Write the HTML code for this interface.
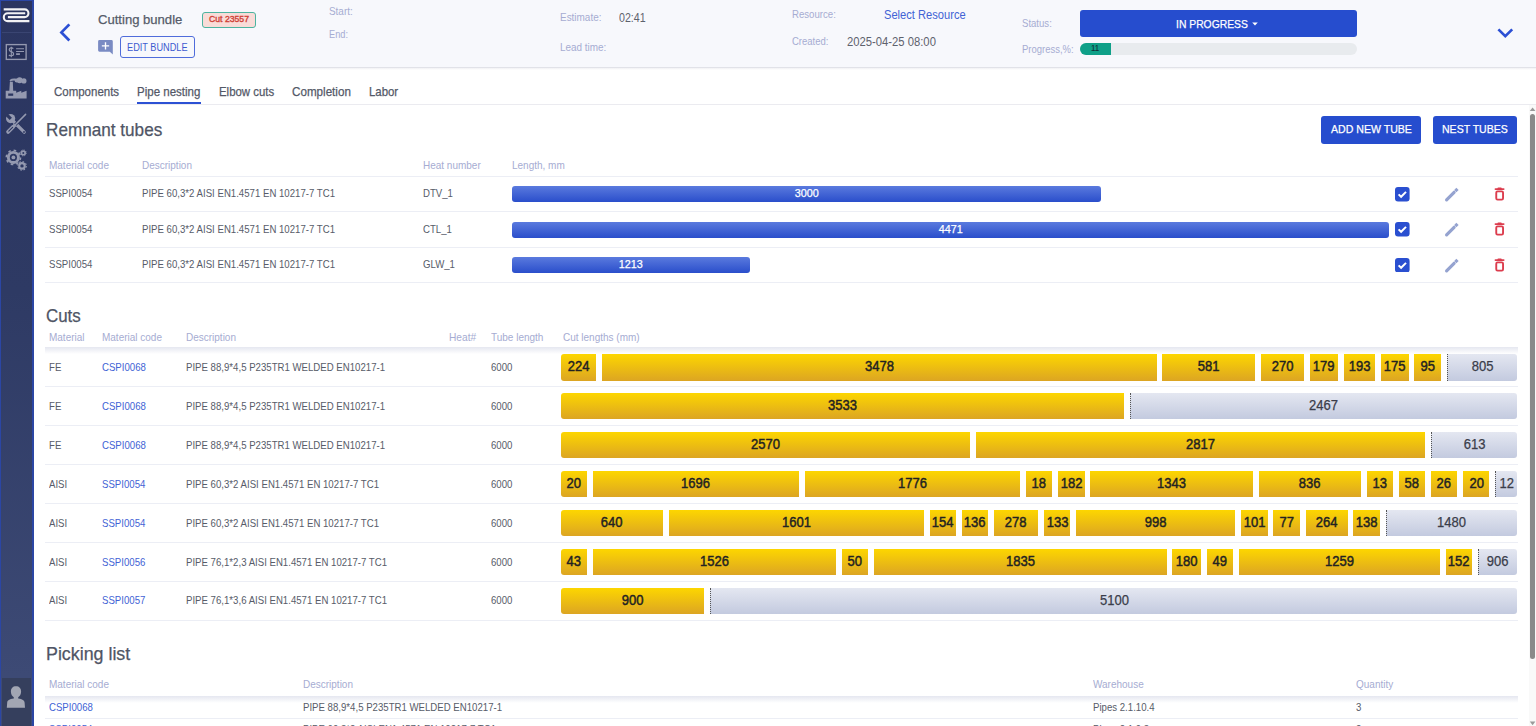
<!DOCTYPE html>
<html><head><meta charset="utf-8"><style>
html,body{margin:0;padding:0;}
body{width:1536px;height:726px;overflow:hidden;position:relative;background:#fff;font-family:"Liberation Sans", sans-serif;}
.t{position:absolute;white-space:nowrap;line-height:1;}
.bars{position:absolute;left:560.7px;width:956.6px;height:26.2px;display:flex;}
.cb{min-width:26.4px;margin-right:5.8px;box-sizing:border-box;background:linear-gradient(#fdd600,#dca523);color:#222;font-size:14px;line-height:26.1px;text-align:center;overflow:hidden;white-space:nowrap;display:flex;justify-content:center;}
.cb span,.rb span{display:inline-block;position:relative;top:-1.2px;transform:scaleX(0.93);-webkit-text-stroke:0.45px #222;}
.rb span{-webkit-text-stroke:0.25px #3a3d4a;}
.rb{flex:1 1 0;min-width:22px;box-sizing:border-box;border-left:1px dotted #555;border-radius:0 3px 3px 0;background:linear-gradient(#e4e7f1,#c3cadf);color:#3a3d4a;font-size:14px;line-height:26.1px;text-align:center;overflow:hidden;white-space:nowrap;display:flex;justify-content:center;}
</style></head><body>
<div style="position:absolute;left:33.00px;top:0.00px;width:1503.00px;height:67.00px;background:#f7f8fc;"></div><div style="position:absolute;left:33.00px;top:67.00px;width:1503.00px;height:1.00px;background:#e1e2e8;"></div><div style="position:absolute;left:33.00px;top:68.00px;width:1503.00px;height:1.50px;background:linear-gradient(#f1f1f4,#fff);"></div><svg style="position:absolute;left:57px;top:22px" width="16" height="22" viewBox="0 0 16 22"><path d="M11.4 3.3 L4.4 10.4 L11.4 17.5" fill="none" stroke="#2b4fd4" stroke-width="2.7" stroke-linecap="square" stroke-linejoin="miter"/></svg><div class="t" style="left:97.50px;top:13.30px;font-size:13.20px;color:#555b69;font-weight:normal;transform:scaleX(0.9913);transform-origin:0 0;-webkit-text-stroke:0.25px #555b69;">Cutting bundle</div><div style="position:absolute;left:202.30px;top:12.10px;width:53.40px;height:15.80px;box-sizing:border-box;border:1.1px solid #4cb4a0;background:#f9dcd8;border-radius:3px;"></div><div class="t" style="left:209.00px;top:15.00px;font-size:8.80px;color:#cf3f35;font-weight:normal;transform:scaleX(0.9849);transform-origin:0 0;-webkit-text-stroke:0.35px #cf3f35;">Cut 23557</div><svg style="position:absolute;left:98px;top:39.5px" width="16" height="16" viewBox="0 0 16 16"><path d="M1.5 0.1 H13.4 A1.4 1.4 0 0 1 14.8 1.5 V14.5 L11.8 11.7 H1.5 A1.4 1.4 0 0 1 0.1 10.3 V1.5 A1.4 1.4 0 0 1 1.5 0.1 Z" fill="#7a8bc3"/><path d="M7.5 2.2 V9.5 M3.85 5.9 H11.15" stroke="#fff" stroke-width="1.35"/></svg><div style="position:absolute;left:120.10px;top:36.00px;width:74.70px;height:21.50px;box-sizing:border-box;border:1px solid #4f6cdb;border-radius:3px;"></div><div class="t" style="left:127.40px;top:42.15px;font-size:10.50px;color:#3d5bd0;font-weight:normal;transform:scaleX(0.8751);transform-origin:0 0;">EDIT BUNDLE</div><div class="t" style="left:328.90px;top:6.75px;font-size:10.30px;color:#a6acd2;font-weight:normal;transform:scaleX(0.9627);transform-origin:0 0;">Start:</div><div class="t" style="left:328.90px;top:29.75px;font-size:10.30px;color:#a6acd2;font-weight:normal;transform:scaleX(0.8976);transform-origin:0 0;">End:</div><div class="t" style="left:560.20px;top:12.75px;font-size:10.30px;color:#a6acd2;font-weight:normal;transform:scaleX(0.9662);transform-origin:0 0;">Estimate:</div><div class="t" style="left:618.80px;top:12.25px;font-size:12.30px;color:#5e626d;font-weight:normal;transform:scaleX(0.8666);transform-origin:0 0;">02:41</div><div class="t" style="left:560.20px;top:42.75px;font-size:10.30px;color:#a6acd2;font-weight:normal;transform:scaleX(0.9646);transform-origin:0 0;">Lead time:</div><div class="t" style="left:791.70px;top:9.75px;font-size:10.30px;color:#a6acd2;font-weight:normal;transform:scaleX(0.9347);transform-origin:0 0;">Resource:</div><div class="t" style="left:883.50px;top:9.25px;font-size:12.30px;color:#4263d5;font-weight:normal;transform:scaleX(0.9056);transform-origin:0 0;">Select Resource</div><div class="t" style="left:791.70px;top:36.75px;font-size:10.30px;color:#a6acd2;font-weight:normal;transform:scaleX(0.9240);transform-origin:0 0;">Created:</div><div class="t" style="left:847.40px;top:36.25px;font-size:12.30px;color:#5e626d;font-weight:normal;transform:scaleX(0.9155);transform-origin:0 0;">2025-04-25 08:00</div><div class="t" style="left:1022.40px;top:18.75px;font-size:10.30px;color:#a6acd2;font-weight:normal;transform:scaleX(0.9300);transform-origin:0 0;">Status:</div><div class="t" style="left:1022.40px;top:44.75px;font-size:10.30px;color:#a6acd2;font-weight:normal;transform:scaleX(0.9201);transform-origin:0 0;">Progress,%:</div><div style="position:absolute;left:1080.10px;top:9.60px;width:277.40px;height:27.90px;background:#264dce;border-radius:3px;"></div><div class="t" style="left:1175.60px;top:18.50px;font-size:11.80px;color:#fff;font-weight:normal;transform:scaleX(0.8774);transform-origin:0 0;-webkit-text-stroke:0.25px #fff;">IN PROGRESS</div><svg style="position:absolute;left:1252px;top:21.5px" width="6" height="4" viewBox="0 0 6 4"><path d="M0.2 0.4 H5.8 L3 3.4 Z" fill="#fff"/></svg><div style="position:absolute;left:1080.10px;top:43.10px;width:277.40px;height:11.90px;background:#e8ebee;border-radius:6px;overflow:hidden;"></div><div style="position:absolute;left:1080.10px;top:43.10px;width:30.70px;height:11.90px;background:#0fa088;border-radius:6px 0 0 6px;"></div><div class="t" style="left:1091.40px;top:43.20px;font-size:9.40px;color:#0f2f36;font-weight:normal;transform:scaleX(0.8490);transform-origin:0 0;-webkit-text-stroke:0.1px #0f2f36;">11</div><svg style="position:absolute;left:1495px;top:25px" width="21" height="15" viewBox="0 0 21 15"><path d="M3.4 4.4 L10.3 11.2 L17.2 4.4" fill="none" stroke="#2b4fd4" stroke-width="2.7"/></svg><div style="position:absolute;left:33.00px;top:104.00px;width:1503.00px;height:1.00px;background:#ebebf0;"></div><div class="t" style="left:54.20px;top:85.50px;font-size:12.80px;color:#535867;font-weight:normal;transform:scaleX(0.8970);transform-origin:0 0;-webkit-text-stroke:0.25px #535867;">Components</div><div class="t" style="left:137.30px;top:85.50px;font-size:12.80px;color:#535867;font-weight:normal;transform:scaleX(0.8998);transform-origin:0 0;-webkit-text-stroke:0.25px #535867;">Pipe nesting</div><div class="t" style="left:218.80px;top:85.50px;font-size:12.80px;color:#535867;font-weight:normal;transform:scaleX(0.8919);transform-origin:0 0;-webkit-text-stroke:0.25px #535867;">Elbow cuts</div><div class="t" style="left:292.20px;top:85.50px;font-size:12.80px;color:#535867;font-weight:normal;transform:scaleX(0.9094);transform-origin:0 0;-webkit-text-stroke:0.25px #535867;">Completion</div><div class="t" style="left:368.80px;top:85.50px;font-size:12.80px;color:#535867;font-weight:normal;transform:scaleX(0.8911);transform-origin:0 0;-webkit-text-stroke:0.25px #535867;">Labor</div><div style="position:absolute;left:136.90px;top:102.20px;width:64.20px;height:1.90px;background:#2d51d4;"></div><div style="position:absolute;left:0.00px;top:0.00px;width:33.70px;height:726.00px;background:linear-gradient(#2b3560 0%,#2e3a64 40%,#3d4a75 93%);box-sizing:border-box;border-left:1.8px solid #2b46a4;border-right:2.3px solid #2b46a4;border-top:1.2px solid #2b46a4;"></div><div style="position:absolute;left:1.80px;top:31.50px;width:29.20px;height:1.00px;background:#3a4572;"></div><div style="position:absolute;left:1.80px;top:677.70px;width:29.20px;height:48.30px;background:#353f5d;"></div><svg style="position:absolute;left:0px;top:0px" width="33" height="33" viewBox="0 0 33 33"><path d="M3.7 9.4 H24.6 A3.85 3.85 0 0 1 24.6 17.1 H7.9" fill="none" stroke="#f2f2f4" stroke-width="2.1"/><path d="M25.2 13.3 H7.7 A3.9 3.9 0 0 0 7.7 21.1 H29.4" fill="none" stroke="#f2f2f4" stroke-width="2.1"/></svg><svg style="position:absolute;left:2px;top:38px" width="30" height="28" viewBox="0 0 30 28"><rect x="4.3" y="6.6" width="19.8" height="14.8" fill="#262f57" stroke="#9499b0" stroke-width="1.35"/><path d="M11.3 10.6 C10.5 9.6 7.2 9.4 7.2 11.7 C7.2 14 11.6 13.3 11.6 15.9 C11.6 18.3 8 18 6.9 17" fill="none" stroke="#9499b0" stroke-width="1.2"/><path d="M9.3 8.8 V19.2" stroke="#9499b0" stroke-width="1.1"/><path d="M14.1 10.7 H22 M14.1 13.5 H22" stroke="#9499b0" stroke-width="1.1"/><path d="M14.1 16.1 H17.9" stroke="#9499b0" stroke-width="1.7"/></svg><svg style="position:absolute;left:2px;top:72px" width="30" height="30" viewBox="0 0 30 30"><path d="M3.7 26.4 V18.8 H7.3 L7.9 9.7 H10.8 L11.2 18.8 H14.2 V20.7 L19.3 18.8 V20.7 L24.6 18.8 V26.4 Z" fill="#9499b0"/><rect x="6.2" y="21.5" width="5" height="2.3" fill="#2c3760"/><circle cx="17.6" cy="8.3" r="3" fill="#9499b0"/><circle cx="21.9" cy="8.9" r="2.6" fill="#9499b0"/><circle cx="14.6" cy="8.4" r="2" fill="#9499b0"/><path d="M8.6 8.4 C10 7.2 12 7.6 14 7.6" fill="none" stroke="#9499b0" stroke-width="1.9" stroke-linecap="round"/></svg><svg style="position:absolute;left:2px;top:108px" width="30" height="30" viewBox="0 0 30 30"><circle cx="8.6" cy="10.6" r="4.6" fill="#9499b0"/><path d="M8.8 10.8 L4.6 6.6" stroke="#2c3760" stroke-width="3.2"/><path d="M10.5 12.5 L22.2 24.2" stroke="#9499b0" stroke-width="3.2" stroke-linecap="round"/><circle cx="22" cy="24" r="0.9" fill="#2c3760"/><path d="M20 10 L9 21" stroke="#2c3760" stroke-width="3"/><path d="M23.6 6.4 L12.8 17.2" stroke="#9499b0" stroke-width="1.5" stroke-linecap="round"/><path d="M11.5 16 L14 18.5" stroke="#9499b0" stroke-width="1.6"/><path d="M11.3 18.7 L6.1 23.9" stroke="#9499b0" stroke-width="3.8" stroke-linecap="round"/><path d="M10.6 19.4 L6.8 23.2" stroke="#2c3760" stroke-width="1.1" stroke-linecap="round"/></svg><svg style="position:absolute;left:2px;top:144px" width="30" height="30" viewBox="0 0 30 30"><g fill="none" stroke="#9499b0"><circle cx="11.4" cy="13.4" r="5.05" stroke-width="2.9"/><circle cx="11.4" cy="13.4" r="7.1" stroke-width="1.6" stroke-dasharray="2.6 2.98"/><circle cx="21.3" cy="8.9" r="1.85" stroke-width="1.7"/><circle cx="21.3" cy="8.9" r="3" stroke-width="0.9" stroke-dasharray="1.1 1.26"/><circle cx="20" cy="21.9" r="2.75" stroke-width="2.1"/><circle cx="20" cy="21.9" r="4.3" stroke-width="1.1" stroke-dasharray="1.6 1.78"/></g><circle cx="11.4" cy="13.4" r="1.9" fill="#9499b0"/></svg><svg style="position:absolute;left:0px;top:680px" width="33" height="33" viewBox="0 0 33 33"><path d="M16 6.2 C19.2 6.2 21.1 8.2 21.1 11.6 C21.1 14.6 19.7 16.5 18.2 17.2 V18.6 C22.5 19.3 24.4 20.4 24.6 22.5 L25 27.7 H6.8 L7.2 22.5 C7.4 20.4 9.3 19.3 13.8 18.6 V17.2 C12.3 16.5 10.9 14.6 10.9 11.6 C10.9 8.2 12.8 6.2 16 6.2 Z" fill="#a2a6b3"/></svg><div style="position:absolute;left:1529.00px;top:105.00px;width:7.00px;height:621.00px;background:#f9f9f9;"></div><svg style="position:absolute;left:1529px;top:105px" width="7" height="8" viewBox="0 0 7 8"><path d="M0.8 6 H6.4 L3.6 2.6 Z" fill="#9a9a9a"/></svg><div style="position:absolute;left:1530.00px;top:114.00px;width:5.00px;height:545.00px;background:#8a8a8a;border-radius:2.5px;"></div><svg style="position:absolute;left:1529px;top:719px" width="7" height="7" viewBox="0 0 7 7"><path d="M0.8 2.6 H6.4 L3.6 6.2 Z" fill="#9a9a9a"/></svg><div class="t" style="left:46.00px;top:121.30px;font-size:18.20px;color:#4f5565;font-weight:normal;transform:scaleX(0.9425);transform-origin:0 0;-webkit-text-stroke:0.25px #4f5565;">Remnant tubes</div><div style="position:absolute;left:1320.70px;top:116.00px;width:99.90px;height:28.00px;background:#264dce;border-radius:3px;"></div><div class="t" style="left:1330.50px;top:123.65px;font-size:11.50px;color:#fff;font-weight:normal;transform:scaleX(0.9196);transform-origin:0 0;-webkit-text-stroke:0.25px #fff;">ADD NEW TUBE</div><div style="position:absolute;left:1432.80px;top:116.00px;width:84.60px;height:28.00px;background:#264dce;border-radius:3px;"></div><div class="t" style="left:1442.10px;top:123.65px;font-size:11.50px;color:#fff;font-weight:normal;transform:scaleX(0.9162);transform-origin:0 0;-webkit-text-stroke:0.25px #fff;">NEST TUBES</div><div class="t" style="left:48.50px;top:160.75px;font-size:10.30px;color:#a6acd2;font-weight:normal;transform:scaleX(0.9700);transform-origin:0 0;">Material code</div><div class="t" style="left:141.90px;top:160.75px;font-size:10.30px;color:#a6acd2;font-weight:normal;transform:scaleX(0.9700);transform-origin:0 0;">Description</div><div class="t" style="left:422.90px;top:160.75px;font-size:10.30px;color:#a6acd2;font-weight:normal;transform:scaleX(0.9700);transform-origin:0 0;">Heat number</div><div class="t" style="left:511.90px;top:160.75px;font-size:10.30px;color:#a6acd2;font-weight:normal;transform:scaleX(0.9700);transform-origin:0 0;">Length, mm</div><div style="position:absolute;left:45.00px;top:176.00px;width:1472.50px;height:1.00px;background:#eceef5;"></div><div style="position:absolute;left:45.00px;top:211.40px;width:1472.50px;height:1.00px;background:#eceef5;"></div><div style="position:absolute;left:45.00px;top:246.80px;width:1472.50px;height:1.00px;background:#eceef5;"></div><div style="position:absolute;left:45.00px;top:282.20px;width:1472.50px;height:1.00px;background:#eceef5;"></div><div class="t" style="left:48.50px;top:188.75px;font-size:10.30px;color:#575c69;font-weight:normal;transform:scaleX(0.9350);transform-origin:0 0;">SSPI0054</div><div class="t" style="left:141.90px;top:188.75px;font-size:10.30px;color:#575c69;font-weight:normal;transform:scaleX(0.9350);transform-origin:0 0;">PIPE 60,3*2 AISI EN1.4571 EN 10217-7 TC1</div><div class="t" style="left:422.90px;top:188.75px;font-size:10.30px;color:#575c69;font-weight:normal;transform:scaleX(0.9350);transform-origin:0 0;">DTV_1</div><div style="position:absolute;left:511.9px;top:186.25px;width:588.66px;height:15.9px;border-radius:3px;background:linear-gradient(#5a7ade,#2a4ecb);color:#fff;font-size:11.4px;line-height:15.9px;text-align:center;"><span style="display:inline-block;transform:scaleX(0.95);-webkit-text-stroke:0.25px #fff">3000</span></div><svg style="position:absolute;left:1395px;top:187.00px" width="14.6" height="14.6" viewBox="0 0 14.6 14.6"><rect x="0" y="0" width="14.6" height="14.6" rx="3" fill="#2a4fd0"/><path d="M3.6 7.4 L6.1 9.8 L11 4.9" fill="none" stroke="#fff" stroke-width="2"/></svg><svg style="position:absolute;left:1440px;top:181.70px" width="22" height="22" viewBox="0 0 22 22"><path d="M6.6 17.8 L14.1 10.3" stroke="#95a3d0" stroke-width="3.2" stroke-linecap="round"/><path d="M15.3 9.1 L17.5 6.9" stroke="#95a3d0" stroke-width="3.2"/></svg><svg style="position:absolute;left:1494px;top:187.00px" width="12" height="15" viewBox="0 0 12 15"><path d="M1.5 2.1 H9.6" stroke="#dc3d4e" stroke-width="1.9" stroke-linecap="round"/><rect x="3.4" y="0.4" width="4.4" height="1.8" rx="0.9" fill="#dc3d4e"/><rect x="2.25" y="4.35" width="6.8" height="8.3" rx="1.3" fill="none" stroke="#dc3d4e" stroke-width="1.9"/></svg><div class="t" style="left:48.50px;top:224.75px;font-size:10.30px;color:#575c69;font-weight:normal;transform:scaleX(0.9350);transform-origin:0 0;">SSPI0054</div><div class="t" style="left:141.90px;top:224.75px;font-size:10.30px;color:#575c69;font-weight:normal;transform:scaleX(0.9350);transform-origin:0 0;">PIPE 60,3*2 AISI EN1.4571 EN 10217-7 TC1</div><div class="t" style="left:422.90px;top:224.75px;font-size:10.30px;color:#575c69;font-weight:normal;transform:scaleX(0.9350);transform-origin:0 0;">CTL_1</div><div style="position:absolute;left:511.9px;top:221.65px;width:877.30px;height:15.9px;border-radius:3px;background:linear-gradient(#5a7ade,#2a4ecb);color:#fff;font-size:11.4px;line-height:15.9px;text-align:center;"><span style="display:inline-block;transform:scaleX(0.95);-webkit-text-stroke:0.25px #fff">4471</span></div><svg style="position:absolute;left:1395px;top:222.40px" width="14.6" height="14.6" viewBox="0 0 14.6 14.6"><rect x="0" y="0" width="14.6" height="14.6" rx="3" fill="#2a4fd0"/><path d="M3.6 7.4 L6.1 9.8 L11 4.9" fill="none" stroke="#fff" stroke-width="2"/></svg><svg style="position:absolute;left:1440px;top:217.10px" width="22" height="22" viewBox="0 0 22 22"><path d="M6.6 17.8 L14.1 10.3" stroke="#95a3d0" stroke-width="3.2" stroke-linecap="round"/><path d="M15.3 9.1 L17.5 6.9" stroke="#95a3d0" stroke-width="3.2"/></svg><svg style="position:absolute;left:1494px;top:222.40px" width="12" height="15" viewBox="0 0 12 15"><path d="M1.5 2.1 H9.6" stroke="#dc3d4e" stroke-width="1.9" stroke-linecap="round"/><rect x="3.4" y="0.4" width="4.4" height="1.8" rx="0.9" fill="#dc3d4e"/><rect x="2.25" y="4.35" width="6.8" height="8.3" rx="1.3" fill="none" stroke="#dc3d4e" stroke-width="1.9"/></svg><div class="t" style="left:48.50px;top:259.75px;font-size:10.30px;color:#575c69;font-weight:normal;transform:scaleX(0.9350);transform-origin:0 0;">SSPI0054</div><div class="t" style="left:141.90px;top:259.75px;font-size:10.30px;color:#575c69;font-weight:normal;transform:scaleX(0.9350);transform-origin:0 0;">PIPE 60,3*2 AISI EN1.4571 EN 10217-7 TC1</div><div class="t" style="left:422.90px;top:259.75px;font-size:10.30px;color:#575c69;font-weight:normal;transform:scaleX(0.9350);transform-origin:0 0;">GLW_1</div><div style="position:absolute;left:511.9px;top:257.05px;width:238.01px;height:15.9px;border-radius:3px;background:linear-gradient(#5a7ade,#2a4ecb);color:#fff;font-size:11.4px;line-height:15.9px;text-align:center;"><span style="display:inline-block;transform:scaleX(0.95);-webkit-text-stroke:0.25px #fff">1213</span></div><svg style="position:absolute;left:1395px;top:257.80px" width="14.6" height="14.6" viewBox="0 0 14.6 14.6"><rect x="0" y="0" width="14.6" height="14.6" rx="3" fill="#2a4fd0"/><path d="M3.6 7.4 L6.1 9.8 L11 4.9" fill="none" stroke="#fff" stroke-width="2"/></svg><svg style="position:absolute;left:1440px;top:252.50px" width="22" height="22" viewBox="0 0 22 22"><path d="M6.6 17.8 L14.1 10.3" stroke="#95a3d0" stroke-width="3.2" stroke-linecap="round"/><path d="M15.3 9.1 L17.5 6.9" stroke="#95a3d0" stroke-width="3.2"/></svg><svg style="position:absolute;left:1494px;top:257.80px" width="12" height="15" viewBox="0 0 12 15"><path d="M1.5 2.1 H9.6" stroke="#dc3d4e" stroke-width="1.9" stroke-linecap="round"/><rect x="3.4" y="0.4" width="4.4" height="1.8" rx="0.9" fill="#dc3d4e"/><rect x="2.25" y="4.35" width="6.8" height="8.3" rx="1.3" fill="none" stroke="#dc3d4e" stroke-width="1.9"/></svg><div class="t" style="left:45.70px;top:307.30px;font-size:18.20px;color:#4f5565;font-weight:normal;transform:scaleX(0.9278);transform-origin:0 0;-webkit-text-stroke:0.25px #4f5565;">Cuts</div><div class="t" style="left:48.70px;top:332.75px;font-size:10.30px;color:#a6acd2;font-weight:normal;transform:scaleX(0.9700);transform-origin:0 0;">Material</div><div class="t" style="left:101.90px;top:332.75px;font-size:10.30px;color:#a6acd2;font-weight:normal;transform:scaleX(0.9700);transform-origin:0 0;">Material code</div><div class="t" style="left:186.10px;top:332.75px;font-size:10.30px;color:#a6acd2;font-weight:normal;transform:scaleX(0.9700);transform-origin:0 0;">Description</div><div class="t" style="left:490.50px;top:332.75px;font-size:10.30px;color:#a6acd2;font-weight:normal;transform:scaleX(0.9700);transform-origin:0 0;">Tube length</div><div class="t" style="left:563.00px;top:332.75px;font-size:10.30px;color:#a6acd2;font-weight:normal;transform:scaleX(0.9700);transform-origin:0 0;">Cut lengths (mm)</div><div class="t" style="left:448.60px;top:332.75px;font-size:10.30px;color:#a6acd2;font-weight:normal;transform:scaleX(0.9891);transform-origin:0 0;">Heat#</div><div style="position:absolute;left:45.00px;top:346.50px;width:1472.50px;height:7.00px;background:linear-gradient(#e5e7f0,rgba(255,255,255,0));"></div><div class="t" style="left:48.70px;top:362.75px;font-size:10.30px;color:#575c69;font-weight:normal;transform:scaleX(0.9350);transform-origin:0 0;">FE</div><div class="t" style="left:101.90px;top:362.75px;font-size:10.30px;color:#4263d5;font-weight:normal;transform:scaleX(0.9350);transform-origin:0 0;">CSPI0068</div><div class="t" style="left:186.10px;top:362.75px;font-size:10.30px;color:#575c69;font-weight:normal;transform:scaleX(0.9350);transform-origin:0 0;">PIPE 88,9*4,5 P235TR1 WELDED EN10217-1</div><div class="t" style="left:490.50px;top:362.75px;font-size:10.30px;color:#575c69;font-weight:normal;transform:scaleX(0.9350);transform-origin:0 0;">6000</div><div style="position:absolute;left:45.00px;top:386.10px;width:1472.50px;height:1.00px;background:#eceef5;"></div><div class="bars" style="top:354.40px"><div class="cb" style="flex:0 1 35.713px;border-radius:3px 0 0 3px"><span>224</span></div><div class="cb" style="flex:0 1 554.509px;border-radius:0"><span>3478</span></div><div class="cb" style="flex:0 1 92.631px;border-radius:0"><span>581</span></div><div class="cb" style="flex:0 1 43.047px;border-radius:0"><span>270</span></div><div class="cb" style="flex:0 1 28.539px;border-radius:0"><span>179</span></div><div class="cb" style="flex:0 1 30.771px;border-radius:0"><span>193</span></div><div class="cb" style="flex:0 1 27.901px;border-radius:0"><span>175</span></div><div class="cb" style="flex:0 1 15.146px;border-radius:0"><span>95</span></div><div class="rb"><span>805</span></div></div><div class="t" style="left:48.70px;top:401.75px;font-size:10.30px;color:#575c69;font-weight:normal;transform:scaleX(0.9350);transform-origin:0 0;">FE</div><div class="t" style="left:101.90px;top:401.75px;font-size:10.30px;color:#4263d5;font-weight:normal;transform:scaleX(0.9350);transform-origin:0 0;">CSPI0068</div><div class="t" style="left:186.10px;top:401.75px;font-size:10.30px;color:#575c69;font-weight:normal;transform:scaleX(0.9350);transform-origin:0 0;">PIPE 88,9*4,5 P235TR1 WELDED EN10217-1</div><div class="t" style="left:490.50px;top:401.75px;font-size:10.30px;color:#575c69;font-weight:normal;transform:scaleX(0.9350);transform-origin:0 0;">6000</div><div style="position:absolute;left:45.00px;top:425.00px;width:1472.50px;height:1.00px;background:#eceef5;"></div><div class="bars" style="top:393.30px"><div class="cb" style="flex:0 1 563.278px;border-radius:3px 0 0 3px"><span>3533</span></div><div class="rb"><span>2467</span></div></div><div class="t" style="left:48.70px;top:440.75px;font-size:10.30px;color:#575c69;font-weight:normal;transform:scaleX(0.9350);transform-origin:0 0;">FE</div><div class="t" style="left:101.90px;top:440.75px;font-size:10.30px;color:#4263d5;font-weight:normal;transform:scaleX(0.9350);transform-origin:0 0;">CSPI0068</div><div class="t" style="left:186.10px;top:440.75px;font-size:10.30px;color:#575c69;font-weight:normal;transform:scaleX(0.9350);transform-origin:0 0;">PIPE 88,9*4,5 P235TR1 WELDED EN10217-1</div><div class="t" style="left:490.50px;top:440.75px;font-size:10.30px;color:#575c69;font-weight:normal;transform:scaleX(0.9350);transform-origin:0 0;">6000</div><div style="position:absolute;left:45.00px;top:463.90px;width:1472.50px;height:1.00px;background:#eceef5;"></div><div class="bars" style="top:432.20px"><div class="cb" style="flex:0 1 409.744px;border-radius:3px 0 0 3px"><span>2570</span></div><div class="cb" style="flex:0 1 449.124px;border-radius:0"><span>2817</span></div><div class="rb"><span>613</span></div></div><div class="t" style="left:48.70px;top:479.75px;font-size:10.30px;color:#575c69;font-weight:normal;transform:scaleX(0.9350);transform-origin:0 0;">AISI</div><div class="t" style="left:101.90px;top:479.75px;font-size:10.30px;color:#4263d5;font-weight:normal;transform:scaleX(0.9350);transform-origin:0 0;">SSPI0054</div><div class="t" style="left:186.10px;top:479.75px;font-size:10.30px;color:#575c69;font-weight:normal;transform:scaleX(0.9350);transform-origin:0 0;">PIPE 60,3*2 AISI EN1.4571 EN 10217-7 TC1</div><div class="t" style="left:490.50px;top:479.75px;font-size:10.30px;color:#575c69;font-weight:normal;transform:scaleX(0.9350);transform-origin:0 0;">6000</div><div style="position:absolute;left:45.00px;top:502.80px;width:1472.50px;height:1.00px;background:#eceef5;"></div><div class="bars" style="top:471.10px"><div class="cb" style="flex:0 1 3.189px;border-radius:3px 0 0 3px"><span>20</span></div><div class="cb" style="flex:0 1 270.399px;border-radius:0"><span>1696</span></div><div class="cb" style="flex:0 1 283.154px;border-radius:0"><span>1776</span></div><div class="cb" style="flex:0 1 2.870px;border-radius:0"><span>18</span></div><div class="cb" style="flex:0 1 29.017px;border-radius:0"><span>182</span></div><div class="cb" style="flex:0 1 214.119px;border-radius:0"><span>1343</span></div><div class="cb" style="flex:0 1 133.286px;border-radius:0"><span>836</span></div><div class="cb" style="flex:0 1 2.073px;border-radius:0"><span>13</span></div><div class="cb" style="flex:0 1 9.247px;border-radius:0"><span>58</span></div><div class="cb" style="flex:0 1 4.145px;border-radius:0"><span>26</span></div><div class="cb" style="flex:0 1 3.189px;border-radius:0"><span>20</span></div><div class="rb"><span>12</span></div></div><div class="t" style="left:48.70px;top:518.75px;font-size:10.30px;color:#575c69;font-weight:normal;transform:scaleX(0.9350);transform-origin:0 0;">AISI</div><div class="t" style="left:101.90px;top:518.75px;font-size:10.30px;color:#4263d5;font-weight:normal;transform:scaleX(0.9350);transform-origin:0 0;">SSPI0054</div><div class="t" style="left:186.10px;top:518.75px;font-size:10.30px;color:#575c69;font-weight:normal;transform:scaleX(0.9350);transform-origin:0 0;">PIPE 60,3*2 AISI EN1.4571 EN 10217-7 TC1</div><div class="t" style="left:490.50px;top:518.75px;font-size:10.30px;color:#575c69;font-weight:normal;transform:scaleX(0.9350);transform-origin:0 0;">6000</div><div style="position:absolute;left:45.00px;top:541.70px;width:1472.50px;height:1.00px;background:#eceef5;"></div><div class="bars" style="top:510.00px"><div class="cb" style="flex:0 1 102.037px;border-radius:3px 0 0 3px"><span>640</span></div><div class="cb" style="flex:0 1 255.253px;border-radius:0"><span>1601</span></div><div class="cb" style="flex:0 1 24.553px;border-radius:0"><span>154</span></div><div class="cb" style="flex:0 1 21.683px;border-radius:0"><span>136</span></div><div class="cb" style="flex:0 1 44.322px;border-radius:0"><span>278</span></div><div class="cb" style="flex:0 1 21.205px;border-radius:0"><span>133</span></div><div class="cb" style="flex:0 1 159.114px;border-radius:0"><span>998</span></div><div class="cb" style="flex:0 1 16.103px;border-radius:0"><span>101</span></div><div class="cb" style="flex:0 1 12.276px;border-radius:0"><span>77</span></div><div class="cb" style="flex:0 1 42.090px;border-radius:0"><span>264</span></div><div class="cb" style="flex:0 1 22.002px;border-radius:0"><span>138</span></div><div class="rb"><span>1480</span></div></div><div class="t" style="left:48.70px;top:557.75px;font-size:10.30px;color:#575c69;font-weight:normal;transform:scaleX(0.9350);transform-origin:0 0;">AISI</div><div class="t" style="left:101.90px;top:557.75px;font-size:10.30px;color:#4263d5;font-weight:normal;transform:scaleX(0.9350);transform-origin:0 0;">SSPI0056</div><div class="t" style="left:186.10px;top:557.75px;font-size:10.30px;color:#575c69;font-weight:normal;transform:scaleX(0.9350);transform-origin:0 0;">PIPE 76,1*2,3 AISI EN1.4571 EN 10217-7 TC1</div><div class="t" style="left:490.50px;top:557.75px;font-size:10.30px;color:#575c69;font-weight:normal;transform:scaleX(0.9350);transform-origin:0 0;">6000</div><div style="position:absolute;left:45.00px;top:580.60px;width:1472.50px;height:1.00px;background:#eceef5;"></div><div class="bars" style="top:548.90px"><div class="cb" style="flex:0 1 6.856px;border-radius:3px 0 0 3px"><span>43</span></div><div class="cb" style="flex:0 1 243.295px;border-radius:0"><span>1526</span></div><div class="cb" style="flex:0 1 7.972px;border-radius:0"><span>50</span></div><div class="cb" style="flex:0 1 292.560px;border-radius:0"><span>1835</span></div><div class="cb" style="flex:0 1 28.698px;border-radius:0"><span>180</span></div><div class="cb" style="flex:0 1 7.812px;border-radius:0"><span>49</span></div><div class="cb" style="flex:0 1 200.727px;border-radius:0"><span>1259</span></div><div class="cb" style="flex:0 1 24.234px;border-radius:0"><span>152</span></div><div class="rb"><span>906</span></div></div><div class="t" style="left:48.70px;top:595.75px;font-size:10.30px;color:#575c69;font-weight:normal;transform:scaleX(0.9350);transform-origin:0 0;">AISI</div><div class="t" style="left:101.90px;top:595.75px;font-size:10.30px;color:#4263d5;font-weight:normal;transform:scaleX(0.9350);transform-origin:0 0;">SSPI0057</div><div class="t" style="left:186.10px;top:595.75px;font-size:10.30px;color:#575c69;font-weight:normal;transform:scaleX(0.9350);transform-origin:0 0;">PIPE 76,1*3,6 AISI EN1.4571 EN 10217-7 TC1</div><div class="t" style="left:490.50px;top:595.75px;font-size:10.30px;color:#575c69;font-weight:normal;transform:scaleX(0.9350);transform-origin:0 0;">6000</div><div class="bars" style="top:587.80px"><div class="cb" style="flex:0 1 143.490px;border-radius:3px 0 0 3px"><span>900</span></div><div class="rb"><span>5100</span></div></div><div style="position:absolute;left:45.00px;top:619.50px;width:1472.50px;height:1.00px;background:#eceef5;"></div><div class="t" style="left:45.90px;top:645.30px;font-size:18.20px;color:#4f5565;font-weight:normal;transform:scaleX(0.9803);transform-origin:0 0;-webkit-text-stroke:0.25px #4f5565;">Picking list</div><div class="t" style="left:48.70px;top:679.75px;font-size:10.30px;color:#a6acd2;font-weight:normal;transform:scaleX(0.9700);transform-origin:0 0;">Material code</div><div class="t" style="left:303.00px;top:679.75px;font-size:10.30px;color:#a6acd2;font-weight:normal;transform:scaleX(0.9700);transform-origin:0 0;">Description</div><div class="t" style="left:1093.00px;top:679.75px;font-size:10.30px;color:#a6acd2;font-weight:normal;transform:scaleX(0.9700);transform-origin:0 0;">Warehouse</div><div class="t" style="left:1356.00px;top:679.75px;font-size:10.30px;color:#a6acd2;font-weight:normal;transform:scaleX(0.9700);transform-origin:0 0;">Quantity</div><div style="position:absolute;left:45.00px;top:696.00px;width:1472.50px;height:7.00px;background:linear-gradient(#e5e7f0,rgba(255,255,255,0));"></div><div class="t" style="left:48.70px;top:702.75px;font-size:10.30px;color:#4263d5;font-weight:normal;transform:scaleX(0.9350);transform-origin:0 0;">CSPI0068</div><div class="t" style="left:303.00px;top:702.75px;font-size:10.30px;color:#575c69;font-weight:normal;transform:scaleX(0.9350);transform-origin:0 0;">PIPE 88,9*4,5 P235TR1 WELDED EN10217-1</div><div class="t" style="left:1093.00px;top:702.75px;font-size:10.30px;color:#575c69;font-weight:normal;transform:scaleX(0.9350);transform-origin:0 0;">Pipes 2.1.10.4</div><div class="t" style="left:1356.00px;top:702.75px;font-size:10.30px;color:#575c69;font-weight:normal;transform:scaleX(0.9350);transform-origin:0 0;">3</div><div style="position:absolute;left:45.00px;top:718.30px;width:1472.50px;height:1.00px;background:#eceef5;"></div><div class="t" style="left:48.70px;top:724.75px;font-size:10.30px;color:#4263d5;font-weight:normal;transform:scaleX(0.9350);transform-origin:0 0;">SSPI0054</div><div class="t" style="left:303.00px;top:724.75px;font-size:10.30px;color:#575c69;font-weight:normal;transform:scaleX(0.9350);transform-origin:0 0;">PIPE 60,3*2 AISI EN1.4571 EN 10217-7 TC1</div><div class="t" style="left:1093.00px;top:724.75px;font-size:10.30px;color:#575c69;font-weight:normal;transform:scaleX(0.9350);transform-origin:0 0;">Pipes 2.1.9.3</div><div class="t" style="left:1356.00px;top:724.75px;font-size:10.30px;color:#575c69;font-weight:normal;transform:scaleX(0.9350);transform-origin:0 0;">2</div>
</body></html>
